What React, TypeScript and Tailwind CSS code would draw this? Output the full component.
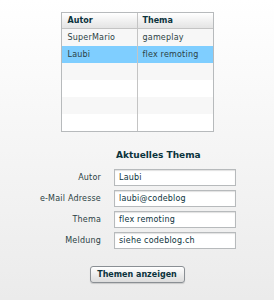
const rows = [
  { autor: "SuperMario", thema: "gameplay" },
  { autor: "Laubi", thema: "flex remoting" },
  { autor: "", thema: "" },
  { autor: "", thema: "" },
  { autor: "", thema: "" },
  { autor: "", thema: "" },
];

const fields = [
  { label: "Autor", value: "Laubi" },
  { label: "e-Mail Adresse", value: "laubi@codeblog" },
  { label: "Thema", value: "flex remoting" },
  { label: "Meldung", value: "siehe codeblog.ch" },
];

const App = () => {
  return (
    <div
      className="w-[274px] h-[300px] bg-gradient-to-b from-white to-[#ebebeb] text-[#0b333c] pt-[12px]"
      style={{ fontFamily: '"DejaVu Sans", Verdana, sans-serif' }}
    >
      {/* data grid */}
      <div className="mx-auto w-[153px] border border-[#b7babc] bg-white">
        <div className="flex h-[16px] bg-gradient-to-b from-white to-[#e4e4e4] border-b border-[#c4c4c4] text-[8px] font-bold">
          <div className="w-[76px] border-r border-[#c4c4c4] pl-[6px] flex items-center">Autor</div>
          <div className="flex-1 pl-[5px] flex items-center">Thema</div>
        </div>
        {rows.map((r, i) => (
          <div
            key={i}
            className={
              "flex h-[17px] text-[8px] tracking-[0.2px] text-[#2b3f44] " +
              (i === 1 ? "bg-[#7fceff]" : i % 2 === 0 ? "bg-[#f7f7f7]" : "bg-white")
            }
          >
            <div className="w-[76px] border-r border-[#c4c4c4] pl-[6px] flex items-center">{r.autor}</div>
            <div className="flex-1 pl-[5px] flex items-center">{r.thema}</div>
          </div>
        ))}
      </div>

      {/* form */}
      <div className="mt-[16px] w-[236px] flex flex-col">
        <div className="ml-[116px] h-[14px] text-[9px] font-bold leading-[14px]">Aktuelles Thema</div>
        <div className="mt-[7px] flex flex-col gap-[4px]">
          {fields.map((f) => (
            <div key={f.label} className="flex items-center h-[17px] tracking-[0.2px]">
              <div className="w-[101px] text-right text-[8px] text-[#2b3f44]">{f.label}</div>
              <div className="ml-[13px] w-[122px] h-[17px] bg-white border border-[#b7babc] shadow-[inset_0_1px_1px_rgba(0,0,0,0.12)] text-[8px] pl-[4px] flex items-center">
                {f.value}
              </div>
            </div>
          ))}
        </div>
      </div>

      <div className="mt-[17px] flex justify-center">
        <button className="w-[95px] h-[17px] rounded-[3px] border border-[#8a8f94] bg-gradient-to-b from-white to-[#dcdcdc] text-[8px] font-bold text-[#0b333c] shadow-[0_1px_1px_rgba(0,0,0,0.15)]">
          Themen anzeigen
        </button>
      </div>
    </div>
  );
};

export default App;
